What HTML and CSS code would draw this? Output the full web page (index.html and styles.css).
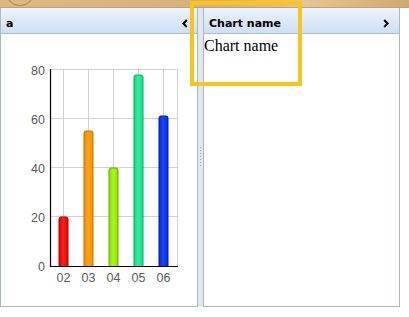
FILE: index.html
```html
<!DOCTYPE html>
<html lang="en">
<head>
    <meta charset="UTF-8">
    <title>Chart panels</title>
    <link rel="stylesheet" href="styles.css">
</head>
<body>
    <div class="topbar">
        <div class="topbar-ring"></div>
    </div>

    <div class="main">
        <div class="panel panel-left">
            <div class="panel-header">
                <span class="panel-title">a</span>
                <svg class="chevron" width="6" height="9" viewBox="0 0 6 9">
                    <polyline points="4.8,1 1.4,4.5 4.8,8" fill="none" stroke="#000" stroke-width="2"/>
                </svg>
            </div>
            <div class="panel-body">
                <svg class="chart" width="196" height="271" viewBox="0 0 196 271">
                    <defs>
                        <linearGradient id="gRed" x1="0" x2="1" y1="0" y2="0">
                            <stop offset="0" stop-color="#d80000"/>
                            <stop offset="0.45" stop-color="#ff2020"/>
                            <stop offset="1" stop-color="#e00000"/>
                        </linearGradient>
                        <linearGradient id="gOrange" x1="0" x2="1" y1="0" y2="0">
                            <stop offset="0" stop-color="#f08a00"/>
                            <stop offset="0.45" stop-color="#ffa21a"/>
                            <stop offset="1" stop-color="#f39000"/>
                        </linearGradient>
                        <linearGradient id="gLime" x1="0" x2="1" y1="0" y2="0">
                            <stop offset="0" stop-color="#88dd00"/>
                            <stop offset="0.45" stop-color="#a8f520"/>
                            <stop offset="1" stop-color="#90e000"/>
                        </linearGradient>
                        <linearGradient id="gGreen" x1="0" x2="1" y1="0" y2="0">
                            <stop offset="0" stop-color="#10d880"/>
                            <stop offset="0.45" stop-color="#30f0a0"/>
                            <stop offset="1" stop-color="#14dc88"/>
                        </linearGradient>
                        <linearGradient id="gBlue" x1="0" x2="1" y1="0" y2="0">
                            <stop offset="0" stop-color="#0028d8"/>
                            <stop offset="0.45" stop-color="#1a44ff"/>
                            <stop offset="1" stop-color="#002ee0"/>
                        </linearGradient>
                    </defs>
                    <g transform="translate(-1,-35)">
                        <!-- grid -->
                        <g stroke="#d2d2d2" stroke-width="1">
                            <line x1="50" y1="70.5" x2="177" y2="70.5"/>
                            <line x1="50" y1="119.5" x2="177" y2="119.5"/>
                            <line x1="50" y1="168.5" x2="177" y2="168.5"/>
                            <line x1="50" y1="217.5" x2="177" y2="217.5"/>
                            <line x1="63.5" y1="70" x2="63.5" y2="267"/>
                            <line x1="88.5" y1="70" x2="88.5" y2="267"/>
                            <line x1="113.5" y1="70" x2="113.5" y2="267"/>
                            <line x1="138.5" y1="70" x2="138.5" y2="267"/>
                            <line x1="163.5" y1="70" x2="163.5" y2="267"/>
                            <line x1="177.5" y1="70" x2="177.5" y2="267"/>
                        </g>

                        <!-- bars -->
                        <path d="M59 267.5 V220 Q59 218 61 218 H66 Q68 218 68 220 V267.5 Z" fill="url(#gRed)" stroke="#b80000"/>
                        <path d="M84 267.5 V134 Q84 132 86 132 H91 Q93 132 93 134 V267.5 Z" fill="url(#gOrange)" stroke="#c87400"/>
                        <path d="M109 267.5 V171 Q109 169 111 169 H116 Q118 169 118 171 V267.5 Z" fill="url(#gLime)" stroke="#6fa800"/>
                        <path d="M134 267.5 V78 Q134 76 136 76 H141 Q143 76 143 78 V267.5 Z" fill="url(#gGreen)" stroke="#0ea868"/>
                        <path d="M159 267.5 V119 Q159 117 161 117 H166 Q168 117 168 119 V267.5 Z" fill="url(#gBlue)" stroke="#0020a8"/>

                        <!-- axes -->
                        <line x1="50.5" y1="70" x2="50.5" y2="268" stroke="#000" stroke-width="1.2"/>
                        <line x1="50" y1="267.5" x2="178" y2="267.5" stroke="#000" stroke-width="1.2"/>

                        <!-- labels -->
                        <g class="axis-label" text-anchor="end">
                            <text x="45" y="76">80</text>
                            <text x="45" y="125">60</text>
                            <text x="45" y="174">40</text>
                            <text x="45" y="223">20</text>
                            <text x="45" y="272">0</text>
                        </g>
                        <g class="axis-label" text-anchor="middle">
                            <text x="63.5" y="283">02</text>
                            <text x="88.5" y="283">03</text>
                            <text x="113.5" y="283">04</text>
                            <text x="138.5" y="283">05</text>
                            <text x="163.5" y="283">06</text>
                        </g>
                    </g>
                </svg>
            </div>
        </div>

        <div class="splitter">
            <div class="grip"></div>
        </div>

        <div class="panel panel-right">
            <div class="panel-header">
                <span class="panel-title">Chart name</span>
                <svg class="chevron" width="6" height="9" viewBox="0 0 6 9">
                    <polyline points="1.2,1 4.6,4.5 1.2,8" fill="none" stroke="#000" stroke-width="2"/>
                </svg>
            </div>
            <div class="panel-body">
                <div class="chart-name">Chart name</div>
            </div>
        </div>
    </div>

    <div class="highlight"></div>
</body>
</html>
```
FILE: styles.css
```css
* {
    box-sizing: border-box;
    margin: 0;
    padding: 0;
}

body {
    width: 409px;
    height: 317px;
    background: #ffffff;
    position: relative;
    overflow: hidden;
    font-family: "DejaVu Sans", Verdana, sans-serif;
}

.topbar {
    height: 8px;
    background: linear-gradient(to right, #dcb984 0%, #d7b07a 55%, #e3c596 75%, #d9b47f 90%, #cfa873 100%);
    border-bottom: 1px solid #c4a070;
    position: relative;
    overflow: hidden;
}

.topbar-ring {
    position: absolute;
    left: 7px;
    top: -16px;
    width: 26px;
    height: 22px;
    border: 1px solid #b48c5a;
    border-radius: 50%;
}

.main {
    display: flex;
    height: 299px;
}

.panel {
    display: flex;
    flex-direction: column;
    border: 1px solid #a7b9c9;
    border-top: none;
    background: #ffffff;
}

.panel-left {
    width: 198px;
}

.panel-right {
    width: 197px;
}

.panel-header {
    height: 26px;
    display: flex;
    align-items: center;
    justify-content: space-between;
    padding: 5px 9px 0 5px;
    background: linear-gradient(to bottom, #ecf4fe 0%, #dde9fa 50%, #cde0f8 100%);
    border-bottom: 1px solid #a9bfd6;
}

.panel-left .panel-header {
    padding-right: 9px;
}

.panel-right .panel-header {
    padding-right: 10px;
}

.panel-title {
    font-size: 11px;
    font-weight: bold;
    color: #000000;
}

.chevron {
    display: block;
}

.panel-body {
    flex: 1;
}

.chart {
    display: block;
}

.axis-label {
    font-family: "Liberation Sans", Arial, sans-serif;
    font-size: 12.5px;
    fill: #5a5a5a;
}

.chart-name {
    font-family: "Liberation Serif", "Times New Roman", serif;
    font-size: 16px;
    line-height: 18px;
    padding-top: 3px;
    color: #000000;
}

.splitter {
    width: 5px;
    background: #e3e6ed;
    position: relative;
}

.grip {
    position: absolute;
    left: 1px;
    top: 138px;
    width: 3px;
    height: 21px;
    background-image: radial-gradient(circle, #98a3b5 0.8px, transparent 0.9px);
    background-size: 3px 3px;
}

.highlight {
    position: absolute;
    left: 190px;
    top: 1px;
    width: 112px;
    height: 85px;
    border: 4px solid #f8c41d;
}
```
